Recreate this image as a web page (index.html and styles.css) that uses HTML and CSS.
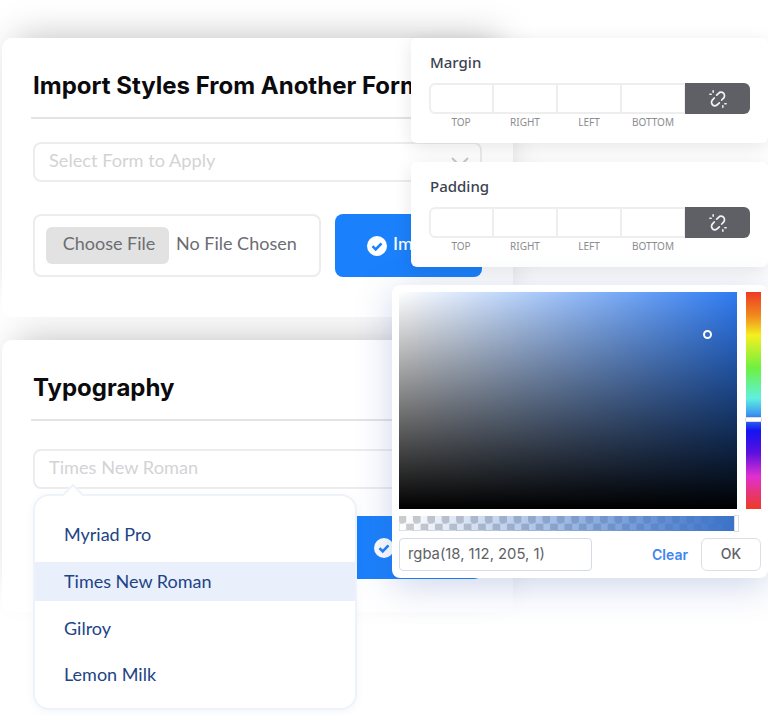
FILE: index.html
```html
<!DOCTYPE html>
<html lang="en">
<head>
<meta charset="utf-8">
<title>Form styler</title>
<link rel="stylesheet" href="styles.css">
</head>
<body>
<main class="canvas">
  <section class="card card-import">
    <h2 class="card-title">Import Styles From Another Form</h2>
    <div class="select">Select Form to Apply
      <svg class="chevron" viewBox="0 0 20 12" width="20" height="12"><path d="M2 2l8 8 8-8" fill="none" stroke="#c9c9c9" stroke-width="2"/></svg>
    </div>
    <div class="file-row">
      <div class="file-box"><span class="file-btn"><span class="lift">Choose File</span></span><span class="lift">No File Chosen</span></div>
      <button class="primary">
        <svg viewBox="0 0 20 20" width="20" height="20"><circle cx="10" cy="10" r="10" fill="#fff"/><path d="M5.5 10.2l3.2 3.2 5.8-6" fill="none" stroke="#1b80fb" stroke-width="2.6"/></svg>
        <span class="lift">Import</span>
      </button>
    </div>
  </section>

  <section class="card card-type">
    <h2 class="card-title">Typography</h2>
    <div class="select select-type">Times New Roman</div>
    <div class="apply-row">
      <button class="primary primary-apply">
        <svg viewBox="0 0 20 20" width="20" height="20"><circle cx="10" cy="10" r="10" fill="#fff"/><path d="M5.5 10.2l3.2 3.2 5.8-6" fill="none" stroke="#1b80fb" stroke-width="2.6"/></svg>
      </button>
    </div>
    <div class="menu">
      <span class="menu-arrow"></span>
      <div class="menu-item">Myriad Pro</div>
      <div class="menu-item active">Times New Roman</div>
      <div class="menu-item">Gilroy</div>
      <div class="menu-item">Lemon Milk</div>
    </div>
  </section>

  <section class="spacing spacing-margin">
    <h3>Margin</h3>
    <div class="cells">
      <div class="cell"></div><div class="cell"></div><div class="cell"></div><div class="cell"></div>
      <div class="link">
        <svg viewBox="0 0 20 20" width="22" height="22" fill="none" stroke="#f2f2f2" stroke-linecap="round"><path d="M8.8 6.4l1.7-1.6a3.1 3.1 0 0 1 4.5 4.4l-1.6 1.7M11.2 13.6l-1.7 1.6a3.1 3.1 0 0 1-4.5-4.4l1.6-1.7" stroke-width="1.6"/><path d="M5.6 2.6v1.2M2.6 5.6h1.2M14.4 17.4v-1.2M17.4 14.4h-1.2" stroke-width="1.4"/></svg>
      </div>
    </div>
    <div class="cell-labels"><span>TOP</span><span>RIGHT</span><span>LEFT</span><span>BOTTOM</span></div>
  </section>

  <section class="spacing spacing-padding">
    <h3>Padding</h3>
    <div class="cells">
      <div class="cell"></div><div class="cell"></div><div class="cell"></div><div class="cell"></div>
      <div class="link">
        <svg viewBox="0 0 20 20" width="22" height="22" fill="none" stroke="#f2f2f2" stroke-linecap="round"><path d="M8.8 6.4l1.7-1.6a3.1 3.1 0 0 1 4.5 4.4l-1.6 1.7M11.2 13.6l-1.7 1.6a3.1 3.1 0 0 1-4.5-4.4l1.6-1.7" stroke-width="1.6"/><path d="M5.6 2.6v1.2M2.6 5.6h1.2M14.4 17.4v-1.2M17.4 14.4h-1.2" stroke-width="1.4"/></svg>
      </div>
    </div>
    <div class="cell-labels"><span>TOP</span><span>RIGHT</span><span>LEFT</span><span>BOTTOM</span></div>
  </section>

  <section class="picker">
    <div class="picker-top">
      <div class="sat"><span class="sat-handle"></span></div>
      <div class="hue"><span class="hue-handle"></span></div>
    </div>
    <div class="alpha"><span class="alpha-fill"></span><span class="alpha-handle"></span></div>
    <div class="picker-foot">
      <div class="value">rgba(18, 112, 205, 1)</div>
      <span class="clear">Clear</span>
      <span class="ok">OK</span>
    </div>
  </section>
</main>
</body>
</html>
```

FILE: styles.css
```css
* { box-sizing: border-box; }
html, body { margin: 0; padding: 0; background: #fff; }
.canvas {
  position: relative;
  width: 768px;
  height: 716px;
  overflow: hidden;
  font-family: Lato, "Liberation Sans", sans-serif;
}
.card {
  position: absolute;
  left: 2px;
  width: 511px;
  background: #fff;
  border-radius: 10px;
  padding: 0 31px 0 31px;
  box-shadow: 0 -14px 35px -14px rgba(0, 0, 0, .26);
}
.card-import { top: 38px; height: 279px; z-index: 2; }
.card-type { top: 340px; height: 272px; z-index: 1; }
.card-title {
  margin: 0 0 0 -2px;
  height: 81px;
  padding: 32px 0 0 2px;
  border-bottom: 2px solid #e3e3e6;
  font-family: Inter, sans-serif;
  font-size: 24px;
  line-height: 32px;
  font-weight: 700;
  color: #0b0b0d;
  white-space: nowrap;
  overflow: hidden;
}
.select {
  position: relative;
  margin-top: 23px;
  height: 40px;
  border: 2px solid #ececee;
  border-radius: 8px;
  padding-left: 14px;
  font-size: 18.2px;
  line-height: 32px;
  color: #d3d3d6;
}
.select-type { margin-top: 28px; }
.chevron { position: absolute; right: 10px; top: 12px; }
.file-row { display: flex; gap: 14px; margin-top: 32px; }
.file-box {
  width: 288px;
  height: 63px;
  border: 2px solid #ececee;
  border-radius: 8px;
  padding: 11px;
  display: flex;
  align-items: center;
  gap: 7px;
  font-size: 18px;
  color: #6c6d72;
}
.lift { padding-bottom: 5px; }
.file-btn {
  width: 123px;
  height: 37px;
  padding-left: 3px;
  background: #e2e2e2;
  border-radius: 6px;
  display: flex;
  align-items: center;
  justify-content: center;
}
.primary {
  width: 147px;
  height: 63px;
  border: 0;
  border-radius: 8px;
  background: #1b80fb;
  color: #fff;
  font: 500 18px Lato, sans-serif;
  display: flex;
  align-items: center;
  justify-content: flex-start;
  gap: 6px;
  padding: 0 0 0 32px;
}
.apply-row { display: flex; justify-content: flex-end; margin-top: 27px; }
.primary-apply { padding-left: 39px; }
.menu {
  position: absolute;
  left: 31px;
  top: 154px;
  width: 324px;
  height: 216px;
  background: #fff;
  border: 2px solid #eef2fa;
  border-radius: 16px;
  padding: 15px 0;
  box-shadow: 0 2px 8px rgba(40, 80, 160, .05);
}
.menu-arrow {
  position: absolute;
  left: 30px;
  top: -9px;
  width: 16px;
  height: 16px;
  background: #fff;
  border-left: 2px solid #eef2fa;
  border-top: 2px solid #eef2fa;
  transform: rotate(45deg);
}
.menu-item {
  height: 46.7px;
  padding-left: 29px;
  display: flex;
  align-items: center;
  font-size: 18px;
  color: #1d4486;
  position: relative;
}
.menu-item.active { background: linear-gradient(#fff 4px, #e9f0fc 4px, #e9f0fc 43px, #fff 43px); }
.spacing {
  position: absolute;
  left: 411px;
  width: 357px;
  height: 105px;
  background: #fff;
  border-radius: 6px;
  padding: 14px 18px 0 18px;
  font-family: "Noto Sans", sans-serif;
  box-shadow: 0 4px 18px rgba(0, 0, 0, .1);
  z-index: 3;
}
.spacing-margin { top: 38px; }
.spacing-padding { top: 162px; }
.spacing h3 {
  margin: 0 0 10px 1px;
  font-size: 15px;
  line-height: 21px;
  font-weight: 500;
  color: #3b4250;
}
.cells { display: flex; height: 31px; }
.cell {
  width: 64px;
  border: 2px solid #eeeeee;
  border-right-width: 1px;
  border-left-width: 1px;
}
.cell:first-child { border-left-width: 2px; border-radius: 6px 0 0 6px; }
.link {
  width: 65px;
  background: #5f6065;
  border-radius: 0 6px 6px 0;
  display: flex;
  align-items: center;
  justify-content: center;
}
.cell-labels { display: flex; margin-top: 1px; }
.cell-labels span {
  width: 64px;
  text-align: center;
  font-size: 10px;
  line-height: 14px;
  color: #8c8c90;
}
.picker {
  position: absolute;
  left: 392px;
  top: 285px;
  width: 376px;
  height: 293px;
  background: #fff;
  border-radius: 8px;
  padding: 7px;
  box-shadow: 0 8px 36px rgba(60, 90, 180, .25);
  z-index: 4;
}
.picker-top { display: flex; justify-content: space-between; width: 362px; }
.sat {
  position: relative;
  width: 338px;
  height: 217px;
  background:
    linear-gradient(to top, #000, rgba(0, 0, 0, 0)),
    linear-gradient(to right, #fff, rgba(255, 255, 255, 0)),
    #2f7bf2;
}
.sat-handle {
  position: absolute;
  left: 304px;
  top: 38px;
  width: 9px;
  height: 9px;
  border: 2px solid #fff;
  border-radius: 50%;
}
.hue {
  position: relative;
  width: 15px;
  height: 217px;
  background: linear-gradient(#ee3a24 0%, #f08a1e 11%, #f5f020 20%, #6ef040 35%, #5ff0e0 49%, #3f9cf0 56%, #1414f0 64%, #5a10e0 74%, #e030d0 85%, #ee3a24 100%);
}
.hue-handle {
  position: absolute;
  left: -1px;
  top: 125px;
  width: 17px;
  height: 5px;
  background: #fff;
  border: 1px solid #ddd;
  border-radius: 1px;
}
.alpha {
  position: relative;
  margin-top: 7px;
  width: 336px;
  height: 15px;
  background: repeating-conic-gradient(#cccccc 0 25%, #ffffff 0 50%) 7.2px 0 / 14.4px 14.4px;
}
.alpha-fill {
  position: absolute;
  inset: 0;
  background: linear-gradient(to right, rgba(58, 114, 200, 0), #3a72c8);
}
.alpha-handle {
  position: absolute;
  right: -4px;
  top: -1px;
  width: 5px;
  height: 17px;
  background: #fff;
  border: 1px solid #ddd;
}
.picker-foot {
  display: flex;
  align-items: center;
  margin-top: 7px;
  width: 362px;
  font-family: Inter, sans-serif;
  font-size: 14px;
}
.value {
  width: 193px;
  height: 33px;
  border: 1.5px solid #d5dbe8;
  border-radius: 4px;
  padding-left: 8px;
  font-size: 14.8px;
  line-height: 30px;
  color: #606266;
}
.clear { margin-left: 60px; color: #3f86f0; font-weight: 600; }
.ok {
  margin-left: auto;
  width: 60px;
  height: 33px;
  border: 1.5px solid #dcdfe6;
  border-radius: 6px;
  text-align: center;
  line-height: 30px;
  color: #606266;
  font-weight: 500;
}
```
